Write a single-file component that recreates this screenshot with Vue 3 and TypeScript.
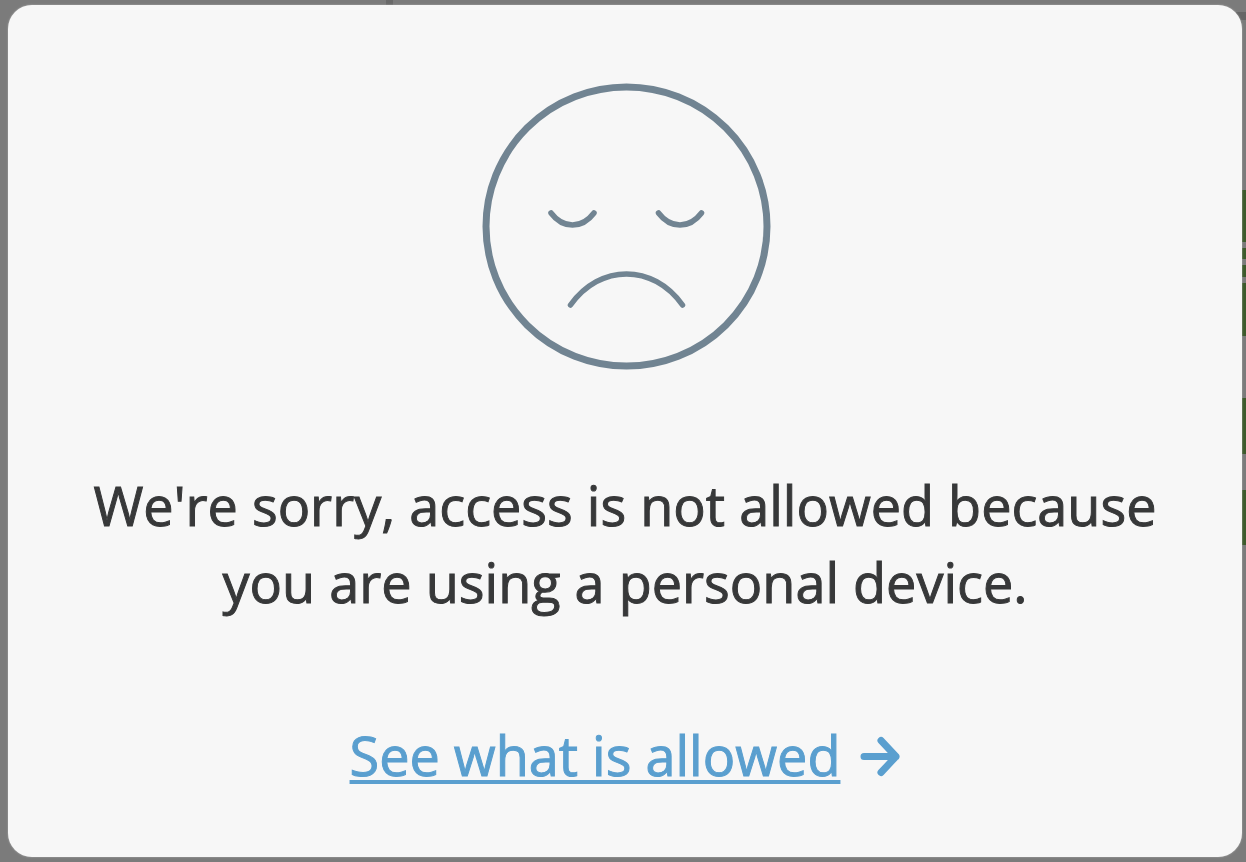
<script setup lang="ts">
interface Peek {
  top: number
  height: number
}

const peeks: Peek[] = [
  { top: 190, height: 52 },
  { top: 248, height: 11 },
  { top: 265, height: 12 },
  { top: 283, height: 53 },
  { top: 398, height: 56 },
  { top: 490, height: 55 },
]
</script>

<template>
  <main class="overlay">
    <div class="backdrop" aria-hidden="true">
      <span class="divider"></span>
      <span class="edge"></span>
      <span
        v-for="peek in peeks"
        :key="peek.top"
        class="peek"
        :style="{ top: peek.top + 'px', height: peek.height + 'px' }"
      ></span>
    </div>
    <section class="card" role="dialog" aria-labelledby="message">
      <svg class="face" viewBox="0 0 290 290" aria-hidden="true">
        <ellipse cx="146.5" cy="144.5" rx="140.5" ry="139.5" stroke-width="7" />
        <path d="M71 131C83 147 102 147 114 131" stroke-width="5.5" />
        <path d="M178.500 131C190.500 147 209.500 147 221.500 131" stroke-width="5.5" />
        <path d="M90.500 223C120 181.500 173 181.500 202.500 223" stroke-width="5.5" />
      </svg>
      <p id="message" class="message">
        We're sorry, access is not allowed because you are using a personal device.
      </p>
      <a class="link" href="#allowed">
        <span class="label">See what is allowed</span>
        <svg class="arrow" viewBox="0 0 40 44" aria-hidden="true">
          <path d="M4 22.500H36M21 6.500L36 22.500L21 38.500" />
        </svg>
      </a>
    </section>
  </main>
</template>

<style>
body {
  margin: 0;
  background: #7b7b7b;
}
</style>

<style scoped>
.overlay {
  position: relative;
  box-sizing: border-box;
  min-height: 100vh;
  padding: 5px 4px 5px 8px;
  display: flex;
  overflow: hidden;
  font-family: "Open Sans", "Noto Sans", sans-serif;
}

.backdrop {
  position: absolute;
  inset: 0;
}

.divider {
  position: absolute;
  top: 0;
  left: 386px;
  width: 7px;
  height: 8px;
  background: #696969;
}

.edge {
  position: absolute;
  top: 12px;
  right: 0;
  width: 10px;
  height: 8px;
  background: #666666;
}

.peek {
  position: absolute;
  right: 0;
  width: 6px;
  background: #3d5a2b;
}

.card {
  position: relative;
  flex: 1;
  box-sizing: border-box;
  padding: 77px 80px 48px;
  display: flex;
  flex-direction: column;
  align-items: center;
  border-radius: 24px;
  background: #f7f7f7;
  box-shadow: 0 0 2px #b4b4b4;
}

.face {
  width: 290px;
  height: 290px;
  overflow: visible;
  fill: none;
  stroke: #718492;
  stroke-linecap: round;
}

.message {
  margin: 95px 0 0;
  color: #373839;
  font-size: 54px;
  line-height: 77px;
  text-align: center;
  -webkit-text-stroke: 1px currentColor;
}

.link {
  margin-top: 96px;
  display: flex;
  align-items: center;
  gap: 20px;
  color: #5a9fcf;
  font-size: 54px;
  line-height: 77px;
  text-decoration: none;
}

.label {
  text-decoration: underline;
  text-decoration-thickness: 4px;
  text-decoration-skip-ink: none;
  text-underline-offset: 4px;
  -webkit-text-stroke: 1px currentColor;
}

.arrow {
  width: 40px;
  height: 44px;
  overflow: visible;
  fill: none;
  stroke: currentColor;
  stroke-width: 7;
  stroke-linecap: round;
  stroke-linejoin: round;
}
</style>
